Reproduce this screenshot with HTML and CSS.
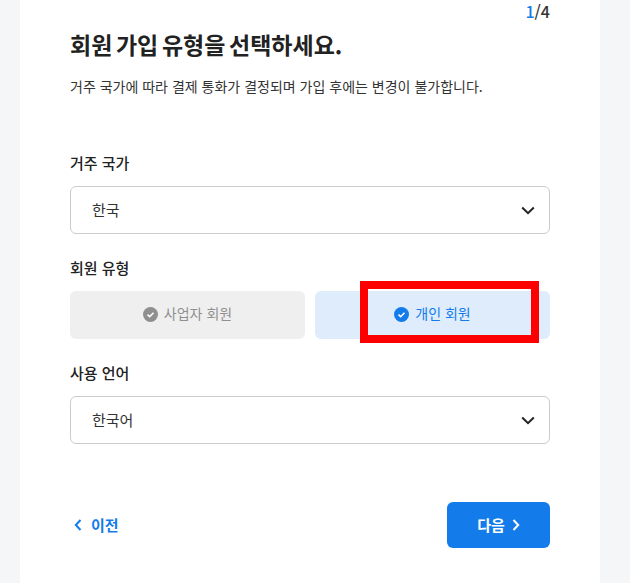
FILE: index.html
```html
<!DOCTYPE html>
<html lang="ko">
<head>
    <meta charset="UTF-8">
    <title>회원 가입</title>
    <link rel="stylesheet" href="styles.css">
</head>
<body>
    <div class="card">
        <div class="step"><span class="step-now">1</span>/4</div>
        <h1>회원 가입 유형을 선택하세요.</h1>
        <p class="desc">거주 국가에 따라 결제 통화가 결정되며 가입 후에는 변경이 불가합니다.</p>

        <label class="label label-country">거주 국가</label>
        <div class="select">
            <span>한국</span>
            <svg class="arrow" width="14" height="9" viewBox="0 0 14 9"><path d="M1.2 1.5 7 7.2l5.8-5.7" fill="none" stroke="#222" stroke-width="2"/></svg>
        </div>

        <label class="label label-type">회원 유형</label>
        <div class="types">
            <div class="type">
                <svg width="15" height="15" viewBox="0 0 15 15"><circle cx="7.5" cy="7.5" r="7.5" fill="#8f8f8f"/><path d="M4.5 7.6l2.2 2.1 3.8-4" fill="none" stroke="#fff" stroke-width="1.6"/></svg>
                <span class="type-name">사업자 회원</span>
            </div>
            <div class="type type-on">
                <svg width="15" height="15" viewBox="0 0 15 15"><circle cx="7.5" cy="7.5" r="7.5" fill="#137cea"/><path d="M4.5 7.6l2.2 2.1 3.8-4" fill="none" stroke="#fff" stroke-width="1.6"/></svg>
                <span class="type-name">개인 회원</span>
                <div class="highlight"></div>
            </div>
        </div>

        <label class="label label-lang">사용 언어</label>
        <div class="select">
            <span>한국어</span>
            <svg class="arrow" width="14" height="9" viewBox="0 0 14 9"><path d="M1.2 1.5 7 7.2l5.8-5.7" fill="none" stroke="#222" stroke-width="2"/></svg>
        </div>

        <div class="actions">
            <a class="prev">
                <svg width="8" height="12" viewBox="0 0 8 12"><path d="M6.5 1 1.8 6l4.7 5" fill="none" stroke="#137cea" stroke-width="2"/></svg>
                <span>이전</span>
            </a>
            <button class="next">
                <span>다음</span>
                <svg width="8" height="12" viewBox="0 0 8 12"><path d="M1.5 1l4.7 5-4.7 5" fill="none" stroke="#fff" stroke-width="2"/></svg>
            </button>
        </div>
    </div>
</body>
</html>
```

FILE: styles.css
```css
html, body {
    height: 100%;
}

body {
    margin: 0;
    background-color: #f5f6f8;
    font-family: "Noto Sans CJK KR", "Noto Sans", sans-serif;
    color: #222;
    overflow: hidden;
}

.card {
    box-sizing: border-box;
    width: 580px;
    height: 583px;
    margin-left: 20px;
    padding: 0 50px;
    background-color: #fff;
}

.step {
    padding-top: 1px;
    height: 22px;
    line-height: 21px;
    text-align: right;
    font-size: 16px;
    font-weight: 500;
    color: #333;
}

.step-now {
    color: #137cea;
}

h1 {
    margin: 5px 0 0;
    font-size: 23px;
    line-height: 32px;
    font-weight: 700;
    word-spacing: -2.8px;
    color: #222;
}

.desc {
    margin: 16px 0 0;
    font-size: 14px;
    line-height: 20px;
    color: #333;
}

.label {
    display: block;
    font-size: 15px;
    line-height: 22px;
    font-weight: 500;
    color: #222;
    margin-bottom: 12px;
}

.label-country {
    margin-top: 56px;
}

.label-type {
    margin-top: 23px;
}

.label-lang {
    margin-top: 23px;
}

.select {
    box-sizing: border-box;
    display: flex;
    align-items: center;
    justify-content: space-between;
    height: 48px;
    padding: 0 14px 2px 21px;
    border: 1px solid #ccc;
    border-radius: 6px;
    font-size: 15px;
    color: #333;
}

.arrow {
    margin-top: 2px;
}

.types {
    display: flex;
    gap: 10px;
}

.type {
    box-sizing: border-box;
    position: relative;
    flex: 1;
    display: flex;
    align-items: center;
    justify-content: center;
    gap: 6px;
    height: 48px;
    padding-bottom: 2px;
    border-radius: 6px;
    background-color: #efefef;
    font-size: 14px;
    color: #8f8f8f;
}

.type-name {
    margin-bottom: 2px;
}

.type-on {
    background-color: #deecfb;
    color: #137cea;
}

/* annotation box over the selected option */
.highlight {
    position: absolute;
    left: 45px;
    top: -10px;
    width: 163px;
    height: 46px;
    border: 8px solid #f00;
}

.actions {
    display: flex;
    align-items: center;
    justify-content: space-between;
    margin-top: 58px;
}

.prev {
    display: flex;
    align-items: center;
    gap: 9px;
    padding-left: 4px;
    font-size: 15px;
    font-weight: 700;
    color: #137cea;
}

.prev span, .next span {
    margin-bottom: 2px;
}

.next {
    display: flex;
    align-items: center;
    justify-content: center;
    gap: 7px;
    width: 103px;
    height: 46px;
    border: none;
    border-radius: 6px;
    background-color: #137cea;
    font-family: inherit;
    font-size: 15px;
    font-weight: 700;
    color: #fff;
}
```
